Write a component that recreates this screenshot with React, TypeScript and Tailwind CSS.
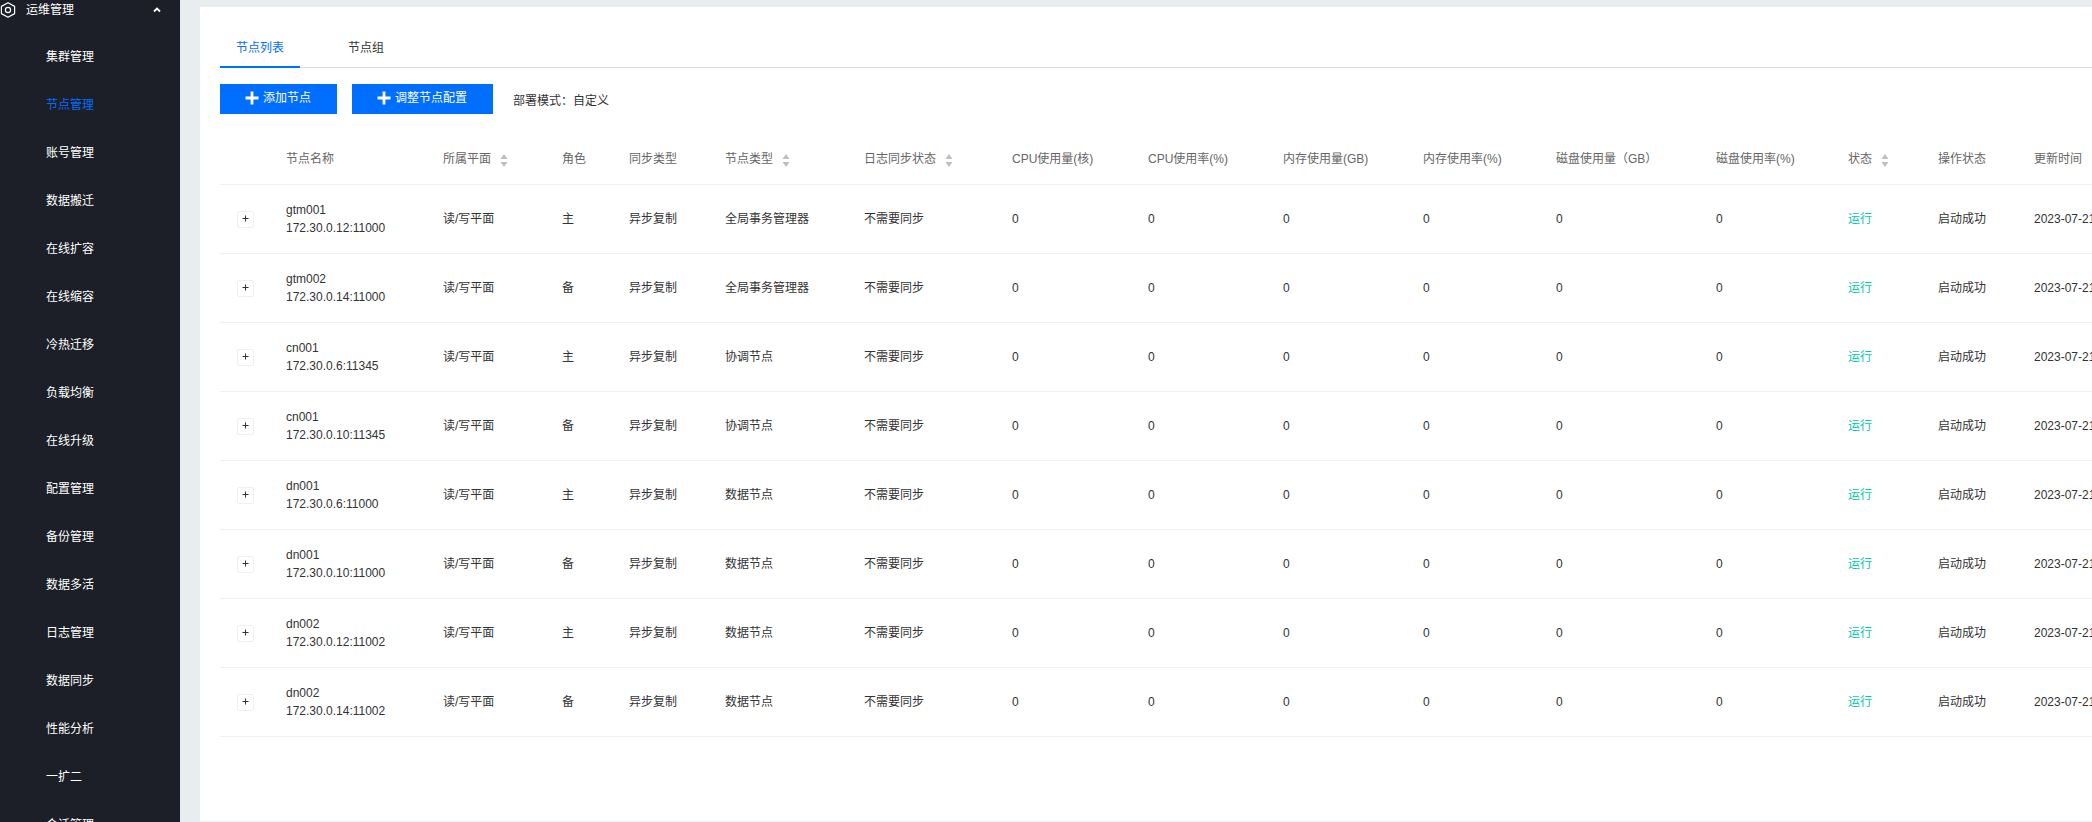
/**
 * Página de gestión de nodos: menú lateral y tabla de nodos
 */

import { useState } from "react";
import clsx from "clsx";

const MENU = [
  "集群管理",
  "节点管理",
  "账号管理",
  "数据搬迁",
  "在线扩容",
  "在线缩容",
  "冷热迁移",
  "负载均衡",
  "在线升级",
  "配置管理",
  "备份管理",
  "数据多活",
  "日志管理",
  "数据同步",
  "性能分析",
  "一扩二",
  "会话管理",
];

const TABS = ["节点列表", "节点组"];

interface Column {
  title: string;
  width: string;
  sortable?: boolean;
}

const COLUMNS: Column[] = [
  { title: "节点名称", width: "w-[157px]" },
  { title: "所属平面", width: "w-[119px]", sortable: true },
  { title: "角色", width: "w-[67px]" },
  { title: "同步类型", width: "w-[96px]" },
  { title: "节点类型", width: "w-[139px]", sortable: true },
  { title: "日志同步状态", width: "w-[148px]", sortable: true },
  { title: "CPU使用量(核)", width: "w-[136px]" },
  { title: "CPU使用率(%)", width: "w-[135px]" },
  { title: "内存使用量(GB)", width: "w-[140px]" },
  { title: "内存使用率(%)", width: "w-[133px]" },
  { title: "磁盘使用量（GB）", width: "w-[160px]" },
  { title: "磁盘使用率(%)", width: "w-[132px]" },
  { title: "状态", width: "w-[90px]", sortable: true },
  { title: "操作状态", width: "w-[96px]" },
  { title: "更新时间", width: "w-[160px]" },
];

interface Nodo {
  name: string;
  address: string;
  role: string;
  type: string;
}

const NODES: Nodo[] = [
  { name: "gtm001", address: "172.30.0.12:11000", role: "主", type: "全局事务管理器" },
  { name: "gtm002", address: "172.30.0.14:11000", role: "备", type: "全局事务管理器" },
  { name: "cn001", address: "172.30.0.6:11345", role: "主", type: "协调节点" },
  { name: "cn001", address: "172.30.0.10:11345", role: "备", type: "协调节点" },
  { name: "dn001", address: "172.30.0.6:11000", role: "主", type: "数据节点" },
  { name: "dn001", address: "172.30.0.10:11000", role: "备", type: "数据节点" },
  { name: "dn002", address: "172.30.0.12:11002", role: "主", type: "数据节点" },
  { name: "dn002", address: "172.30.0.14:11002", role: "备", type: "数据节点" },
];

function PlusIcon() {
  return (
    <svg width="14" height="14" viewBox="0 0 14 14" aria-hidden="true">
      <path d="M7 .5v13M.5 7h13" stroke="currentColor" strokeWidth="2.8" />
    </svg>
  );
}

function SortIcon() {
  return (
    <svg width="8" height="14" viewBox="0 0 8 14" fill="#bfbfbf" aria-hidden="true">
      <path d="M4 0l3.5 5h-7z" />
      <path d="M4 13l3.5-5h-7z" />
    </svg>
  );
}

function Sidebar() {
  const [active, setActive] = useState("节点管理");

  return (
    <aside className="h-full w-[180px] shrink-0 overflow-hidden bg-[#1c1f27] text-white">
      <button type="button" className="flex h-[33px] w-full items-start pt-px pr-[19px] text-left">
        <svg
          className="mt-px"
          width="16"
          height="16"
          viewBox="0 0 16 16"
          fill="none"
          stroke="currentColor"
          strokeWidth="1.2"
          aria-hidden="true"
        >
          <path d="M8 .8l6.6 3.6v7.2L8 15.2l-6.6-3.6V4.4z" strokeLinejoin="round" />
          <circle cx="8" cy="8" r="2.6" />
        </svg>
        <span className="ml-[10px] flex-1">运维管理</span>
        <svg
          className="mt-[5px]"
          width="8"
          height="8"
          viewBox="0 0 8 8"
          fill="none"
          stroke="currentColor"
          strokeWidth="1.8"
          aria-hidden="true"
        >
          <path d="M1 5.5L4 2.5l3 3" />
        </svg>
      </button>
      <nav>
        {MENU.map((item) => (
          <a
            key={item}
            href="#"
            onClick={() => setActive(item)}
            className={clsx(
              "flex h-12 items-center pl-[46px]",
              item === active && "text-[#006eff]"
            )}
          >
            {item}
          </a>
        ))}
      </nav>
    </aside>
  );
}

function NodeTable() {
  return (
    <table className="mt-5 w-full table-fixed text-left whitespace-nowrap">
      <colgroup>
        <col className="w-[50px]" />
        {COLUMNS.map((col) => (
          <col key={col.title} className={col.width} />
        ))}
      </colgroup>
      <thead>
        <tr className="border-b border-[#f0f0f0] text-[#666]">
          <td className="p-4" />
          {COLUMNS.map((col) => (
            <th key={col.title} scope="col" className="p-4 font-normal">
              {col.sortable ? (
                <button type="button" className="flex items-end gap-[9px]">
                  {col.title}
                  <SortIcon />
                </button>
              ) : (
                col.title
              )}
            </th>
          ))}
        </tr>
      </thead>
      <tbody>
        {NODES.map((node) => (
          <tr key={node.name + node.address} className="border-b border-[#f0f0f0]">
            <td className="pl-[17px]">
              <button
                type="button"
                aria-label={`展开 ${node.name}`}
                className="flex h-[17px] w-[17px] items-start justify-center rounded-[2px] border border-[#f0f0f0] bg-white pt-[3px]"
              >
                <svg width="7" height="7" viewBox="0 0 7 7" aria-hidden="true">
                  <path d="M3.5 .5v6M.5 3.5h6" stroke="currentColor" />
                </svg>
              </button>
            </td>
            <td className="p-4">
              <div>{node.name}</div>
              <div>{node.address}</div>
            </td>
            <td className="px-4">读/写平面</td>
            <td className="px-4">{node.role}</td>
            <td className="px-4">异步复制</td>
            <td className="px-4">{node.type}</td>
            <td className="px-4">不需要同步</td>
            <td className="px-4">0</td>
            <td className="px-4">0</td>
            <td className="px-4">0</td>
            <td className="px-4">0</td>
            <td className="px-4">0</td>
            <td className="px-4">0</td>
            <td className="px-4 text-[#00c9a7]">运行</td>
            <td className="px-4">启动成功</td>
            <td className="px-4">2023-07-21</td>
          </tr>
        ))}
      </tbody>
    </table>
  );
}

export default function App() {
  const [tab, setTab] = useState(TABS[0]);

  return (
    <div className="flex h-screen overflow-hidden bg-[#e8edef] font-['Liberation_Sans','Noto_Sans_CJK_SC',sans-serif] text-[12px] leading-[18px] text-[#333]">
      <Sidebar />
      <main className="mt-[7px] mb-px ml-5 min-w-0 flex-1 overflow-hidden bg-white pt-[21px] pl-5">
        <div role="tablist" className="flex gap-8 border-b border-[#dcdcdc]">
          {TABS.map((item) => (
            <button
              key={item}
              type="button"
              role="tab"
              aria-selected={item === tab}
              onClick={() => setTab(item)}
              className={clsx(
                "-mb-px h-10 border-b-2 px-4 pt-[2px]",
                item === tab ? "border-[#006eff] text-[#006eff]" : "border-transparent"
              )}
            >
              {item}
            </button>
          ))}
        </div>

        <div className="mt-4 flex">
          <button
            type="button"
            className="flex h-[30px] items-center gap-1 bg-[#006eff] pr-[26px] pb-[3px] pl-[25px] text-white"
          >
            <PlusIcon />
            添加节点
          </button>
          <button
            type="button"
            className="ml-[15px] flex h-[30px] items-center gap-1 bg-[#006eff] pr-[26px] pb-[3px] pl-[25px] text-white"
          >
            <PlusIcon />
            调整节点配置
          </button>
          <span className="mt-2 ml-5">部署模式：自定义</span>
        </div>

        <NodeTable />
      </main>
    </div>
  );
}
